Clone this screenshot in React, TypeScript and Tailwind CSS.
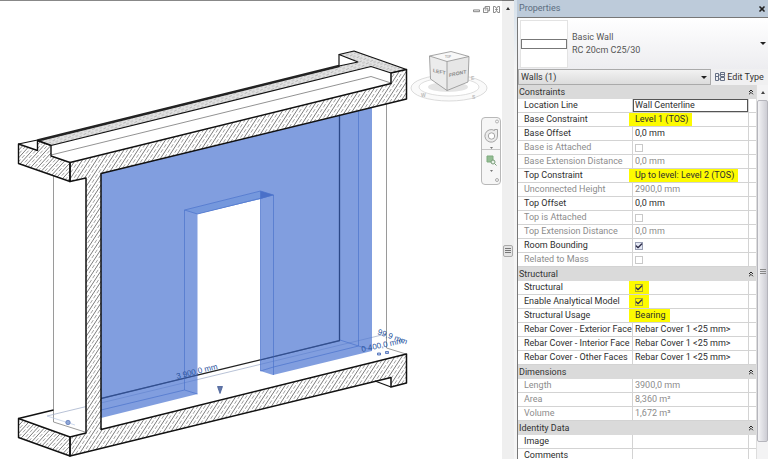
import { Check, ChevronsUp, X } from "lucide-react"

type Row = {
  label: string
  value?: string
  checked?: boolean
  muted?: boolean
  marked?: boolean
  editing?: boolean
}

const groups: { title: string; rows: Row[] }[] = [
  {
    title: "Constraints",
    rows: [
      { label: "Location Line", value: "Wall Centerline", editing: true },
      { label: "Base Constraint", value: "Level 1 (TOS)", marked: true },
      { label: "Base Offset", value: "0,0 mm" },
      { label: "Base is Attached", checked: false, muted: true },
      { label: "Base Extension Distance", value: "0,0 mm", muted: true },
      { label: "Top Constraint", value: "Up to level: Level 2 (TOS)", marked: true },
      { label: "Unconnected Height", value: "2900,0 mm", muted: true },
      { label: "Top Offset", value: "0,0 mm" },
      { label: "Top is Attached", checked: false, muted: true },
      { label: "Top Extension Distance", value: "0,0 mm", muted: true },
      { label: "Room Bounding", checked: true },
      { label: "Related to Mass", checked: false, muted: true },
    ],
  },
  {
    title: "Structural",
    rows: [
      { label: "Structural", checked: true, marked: true },
      { label: "Enable Analytical Model", checked: true, marked: true },
      { label: "Structural Usage", value: "Bearing", marked: true },
      { label: "Rebar Cover - Exterior Face", value: "Rebar Cover 1 <25 mm>" },
      { label: "Rebar Cover - Interior Face", value: "Rebar Cover 1 <25 mm>" },
      { label: "Rebar Cover - Other Faces", value: "Rebar Cover 1 <25 mm>" },
    ],
  },
  {
    title: "Dimensions",
    rows: [
      { label: "Length", value: "3900,0 mm", muted: true },
      { label: "Area", value: "8,360 m²", muted: true },
      { label: "Volume", value: "1,672 m³", muted: true },
    ],
  },
  {
    title: "Identity Data",
    rows: [
      { label: "Image", value: "" },
      { label: "Comments", value: "" },
    ],
  },
]

function Value({ row }: { row: Row }) {
  if (row.editing) {
    return (
      <input
        aria-label={row.label}
        defaultValue={row.value}
        className="block h-[13px] w-full border border-[#555] bg-white pl-px outline-none"
      />
    )
  }

  if (row.checked !== undefined) {
    return (
      <span className={row.marked ? "-ml-1 flex h-full w-5 items-center bg-[#fdfb00] pl-1.5" : "flex h-full items-center pl-0.5"}>
        <span className="relative block size-2">
          <input
            type="checkbox"
            aria-label={row.label}
            defaultChecked={row.checked}
            disabled={row.muted}
            className={`peer block size-2 appearance-none border ${row.muted ? "border-[#c9c9c9]" : row.marked ? "border-[#a5a53c]" : "border-[#9aa0b5] bg-[#e4e8f5]"}`}
          />
          <Check className="pointer-events-none absolute inset-0 hidden size-2 text-[#2c2c48] peer-checked:block" strokeWidth={4} />
        </span>
      </span>
    )
  }

  return (
    <span className={row.marked ? "-ml-1 inline-block h-full bg-[#fdfb00] pr-1 pl-1.5" : "block pl-0.5"}>
      {row.value}
    </span>
  )
}

function PropertyTable() {
  return (
    <table className="w-full table-fixed border-separate border-spacing-0 text-left">
      <colgroup>
        <col className="w-[115px]" />
        <col />
        <col className="w-[7px]" />
      </colgroup>
      {groups.map((group) => (
        <tbody key={group.title}>
          <tr className="h-[14px] bg-[#dadada]">
            <th colSpan={2} className="p-0 pl-px font-normal text-[#333]">{group.title}</th>
            <td className="p-0">
              <ChevronsUp className="-ml-0.5 size-2 text-[#222]" strokeWidth={3} />
            </td>
          </tr>
          {group.rows.map((row) => (
            <tr key={row.label} className={`h-[14px] ${row.muted ? "text-[#8c8c8c]" : "text-[#2e2e2e]"}`}>
              <th className="border-r border-b border-[#d3d3d3] p-0 pl-1.5 font-normal">{row.label}</th>
              <td className="h-[14px] border-r border-b border-[#d3d3d3] p-0">
                <Value row={row} />
              </td>
              <td className="border-b border-[#d3d3d3] p-0" />
            </tr>
          ))}
        </tbody>
      ))}
    </table>
  )
}

function PropertiesPanel() {
  return (
    <aside className="flex w-[251px] shrink-0 flex-col font-[Roboto,sans-serif] text-[9px] leading-[13px] whitespace-nowrap text-[#333]">
      <header className="flex h-[17px] shrink-0 items-center justify-between bg-[#bdcbda] pr-0.5 pl-0.5 text-[#5c6d80]">
        <h2>Properties</h2>
        <button aria-label="Close" className="text-[#222]">
          <X className="size-2" strokeWidth={5} />
        </button>
      </header>

      <div className="flex min-h-0 flex-1 flex-col border-l border-[#777] bg-[#f0f0f1]">
        <button className="flex h-[52px] shrink-0 items-center border-t border-[#777] bg-linear-to-b from-white to-[#ededf0] pr-0.5 pl-0.5 text-left">
          <span className="flex h-12 w-12 items-center border border-[#e3e3e3] bg-white">
            <span className="block h-2.5 w-full border border-[#777]" />
          </span>
          <span className="flex-1 pl-1 text-[#555]">
            <span className="block">Basic Wall</span>
            <span className="block">RC 20cm C25/30</span>
          </span>
          <span className="border-x-[3px] border-t-[3px] border-x-transparent border-t-[#222]" />
        </button>

        <div className="flex h-4 shrink-0 items-stretch">
          <div className="relative flex-1">
            <select
              aria-label="Selected elements"
              className="block h-4 w-full appearance-none border border-[#aaa] bg-linear-to-b from-[#f2f2f2] to-[#dcdcdc] pl-0.5"
            >
              <option>Walls (1)</option>
            </select>
            <span className="pointer-events-none absolute top-[7px] right-1 border-x-[3px] border-t-[3px] border-x-transparent border-t-[#222]" />
          </div>
          <button className="flex w-[57px] items-center justify-center gap-0.5">
            <svg className="size-2.5" viewBox="0 0 10 10" fill="none" stroke="#667085">
              <path d="M.5 1.500h3v7h-3zM.5 4.500h3M5.500 .5h4v4h-4zM5.500 2.500h4M5.500 5.500h4v3h-4zM3.500 3h2M3.500 7h2" />
            </svg>
            Edit Type
          </button>
        </div>

        <div className="flex min-h-0 flex-1">
          <div className="min-w-0 flex-1 overflow-hidden bg-white">
            <PropertyTable />
          </div>
          <div className="flex w-3 shrink-0 flex-col items-center border-l border-[#ddd] bg-[#f3f3f4]">
            <span className="mt-1.5 mb-1.5 border-x-2 border-b-[3px] border-x-transparent border-b-[#444]" />
            <div className="flex h-[342px] w-full flex-col items-center justify-center gap-px rounded-xs border border-[#b5b5bc] bg-linear-to-r from-[#f3f3f5] to-[#cdcdd4]">
              <span className="h-px w-1.5 bg-[#888]" />
              <span className="h-px w-1.5 bg-[#888]" />
              <span className="h-px w-1.5 bg-[#888]" />
            </div>
          </div>
        </div>
      </div>
    </aside>
  )
}

// concrete hatch: solid and dashed diagonals in turn
function Hatch({ clip, from, to, step, run }: { clip: string; from: number; to: number; step: number; run: number }) {
  const count = Math.ceil((to - from) / step)
  return (
    <g clipPath={`url(#${clip})`} strokeWidth=".7">
      {Array.from({ length: count }, (_, i) => (
        <path
          key={i}
          d={`M${from + i * step} 459l${run} -459`}
          stroke={i % 2 ? "#777" : "#444"}
          strokeDasharray={i % 2 ? "4 2" : undefined}
        />
      ))}
    </g>
  )
}

const frontFace =
  "M70 162.500L391 83.500V73L406.500 69.500V99L101 173.500V429.500L406.500 354V383L391 387V377.500L70 456V437L86 433V178L70 181.500Z"
const slabEnd = "M18.500 144L37.500 150.500V140.500L51 145.500V156L70 162.500V181.500L18.500 163.500Z"
const footingEnd = "M18.500 418.500L70 437V456L18.500 437.500Z"

function WallModel() {
  return (
    <svg className="h-[459px] w-[502px] shrink-0" viewBox="0 0 502 459" fill="none" strokeLinejoin="round">
      <defs>
        <clipPath id="front"><path d={frontFace} /></clipPath>
        <clipPath id="ends"><path d={slabEnd + footingEnd} /></clipPath>
        <pattern id="hatchTop" width="5" height="5" patternUnits="userSpaceOnUse" patternTransform="rotate(60)">
          <rect width="5" height="5" fill="#e2e2e2" />
          <path d="M1 0v3M3.500 2v3" stroke="#a8a8a8" strokeWidth=".7" />
        </pattern>
      </defs>

      {/* edges behind the wall */}
      <path d="M53.500 176V422L85 432M386.500 103V348L406 354" stroke="#808080" strokeWidth=".8" />
      <path d="M47 416L386 334" stroke="#9aa8c4" strokeWidth=".7" />
      <path d="M47 416l28 9" stroke="#b9c8e4" strokeWidth=".7" />
      <path d="M101 398.500L340 340.500" stroke="#222" strokeWidth="1.300" />
      <path d="M18.500 418.500L53.500 410" stroke="#111" strokeWidth="1.300" />

      {/* selected wall */}
      <path d="M101 173L372 107V351L273 375L260.500 371V199L197.500 214V394L101 418Z" fill="#5079d2" fillOpacity=".72" />
      <path d="M184.500 210L260.500 191L273.500 195L260.500 199L197.500 214Z" fill="#7598dd" />
      <path d="M260.500 191L273.500 195L260.500 199Z" fill="#4a70c8" />
      <path d="M184.500 210L260.500 191L273.500 195L197.500 214ZM184.500 210V390L197.500 394M273.500 195V375M260.500 191V371M101 410L184.500 390M260.500 371L273.500 367L358.500 346L372 350M358.500 110V346M340 340L358.500 346" stroke="#4a72cb" strokeWidth=".7" />
      <path d="M339.500 115V340.500" stroke="#2b4787" strokeWidth="1.300" />
      <path d="M260.500 360L340 340.500M101 398.500L197.500 375" stroke="#2b4787" strokeWidth=".8" />

      {/* top slab */}
      <path d="M37.500 140.500L339 66L358 62L339 54.500L354 51L406.500 69.500L391 73L371 66.500L51 145.500Z" fill="url(#hatchTop)" stroke="#111" strokeWidth="1.200" />
      <path d="M37.500 140.500L339 66" stroke="#222" strokeWidth="2.400" />
      <path d="M339 54.500V67" stroke="#111" strokeWidth="1.200" />
      <path d="M18.500 144L37.500 140" stroke="#111" strokeWidth="1.200" />
      <path d="M51 155L371 76.500L391 83" stroke="#777" strokeWidth=".8" />

      {/* cut faces of slab, web and foundation */}
      <path d={frontFace} fill="#fff" />
      <Hatch clip="front" from={-260} to={410} step={3.5} run={300} />
      <path d={frontFace} stroke="#111" strokeWidth="1.500" />
      <Hatch clip="ends" from={-460} to={80} step={3.5} run={420} />
      <path d={slabEnd + footingEnd} stroke="#111" strokeWidth="1.400" />
      <path d="M375 381L391 387" stroke="#111" strokeWidth="1.300" />

      {/* temporary dimensions */}
      <g fill="#2d569f" fontFamily="Liberation Sans, sans-serif" fontSize="8">
        <text transform="translate(177 379) rotate(-14)">3 900,0 mm</text>
        <text transform="translate(377 334) rotate(20)">99,9 mm</text>
        <text transform="translate(362 352) rotate(-12)">0 400,0 mm</text>
      </g>
      <path d="M217.500 386.500h5l-2.500 7z" fill="#6478a8" stroke="#35508f" strokeWidth=".7" />
      <circle cx="68" cy="422.500" r="2.200" fill="#8ea6d6" stroke="#5673b5" strokeWidth=".7" />
      <path d="M377.500 353h3v2h-3zM385.500 351.500h3v2h-3z" fill="#b6c6e8" stroke="#4367b5" strokeWidth=".8" />
    </svg>
  )
}

function ViewCube() {
  return (
    <svg className="absolute top-[50px] right-[12px] h-[54px] w-[80px]" viewBox="410 50 80 54" fill="none">
      <ellipse cx="449" cy="88" rx="38" ry="13" fill="#fafafa" stroke="#d2d2d2" strokeWidth=".8" />
      <ellipse cx="449" cy="87" rx="30" ry="9" fill="#fff" stroke="#d6d6d6" strokeWidth=".8" />
      <ellipse cx="448" cy="87" rx="20" ry="5" fill="#e4e4e4" />
      <path d="M429.500 56L451 51.500L469 56.500L447 61.500Z" fill="#f8f8f8" />
      <path d="M429.500 56L447 61.500V90.500L430.500 79Z" fill="#ececec" />
      <path d="M447 61.500L469 56.500L468 82L447 90.500Z" fill="#e6e6e6" />
      <path d="M429.500 56L451 51.500L469 56.500L468 82L447 90.500L430.500 79ZM429.500 56L447 61.500L469 56.500M447 61.500V90.500" stroke="#8f8f8f" strokeWidth=".8" />
      <g fill="#888" fontFamily="Liberation Sans, sans-serif" fontWeight="bold">
        <text fontSize="5" transform="translate(449 77) skewY(-12)">FRONT</text>
        <text fontSize="5" transform="translate(433 72) skewY(12)">LEFT</text>
        <text fontSize="3" x="445" y="57.500" fill="#aaa">TOP</text>
        <text fontSize="5" x="421" y="97" fill="#bbb">W</text>
        <text fontSize="5" x="472" y="99" fill="#bbb">S</text>
        <text fontSize="5" x="471" y="80" fill="#bbb">E</text>
      </g>
    </svg>
  )
}

function NavigationBar() {
  return (
    <div className="absolute top-[117px] right-px flex w-5 flex-col items-center rounded-sm border border-[#b8b8b8] bg-[#f6f6f6]">
      <button aria-label="Steering wheel" className="flex h-8 w-full justify-center border-b border-[#c5c5c5]">
        <svg className="h-8 w-[18px]" viewBox="0 0 18 32" fill="none" stroke="#a5a5a5">
          <circle cx="15" cy="3.500" r="1.500" strokeWidth=".8" />
          <path d="M15.500 11.500V18a6.300 6.300 0 1 1-3-5.500V11.500z" fill="#ececec" />
          <circle cx="9.500" cy="18" r="3.200" fill="#fff" />
          <path d="M8 29h3l-1.500 2z" fill="#777" stroke="none" />
        </svg>
      </button>
      <button aria-label="Zoom" className="flex h-[34px] w-full justify-center">
        <svg className="h-[34px] w-[18px]" viewBox="0 0 18 34" fill="none">
          <path d="M5 6h6v6H5z" fill="#93bd93" stroke="#7fab7f" />
          <circle cx="11" cy="12" r="2" fill="#e8f3e8" stroke="#789b78" />
          <path d="M12.500 13.500l2 2" stroke="#789b78" />
          <path d="M8 20h3l-1.500 2z" fill="#777" />
          <circle cx="15" cy="30" r="1.500" stroke="#999" strokeWidth=".8" />
        </svg>
      </button>
    </div>
  )
}

function WindowButtons() {
  return (
    <div className="absolute top-1 right-0.5 flex h-2.5 items-center gap-[3px] text-[#777]">
      <button aria-label="Minimize">
        <svg className="size-[7px]" viewBox="0 0 8 8" fill="none" stroke="currentColor"><path d="M.5 4.500h7v2h-7z" /></svg>
      </button>
      <button aria-label="Restore">
        <svg className="size-[7px]" viewBox="0 0 8 8" fill="none" stroke="currentColor"><path d="M2.500 2.500v-2h5v5h-2M.5 2.500h5v5h-5zM2 4.500h2" /></svg>
      </button>
      <button aria-label="Close view">
        <svg className="size-[7px]" viewBox="0 0 8 8" fill="none" stroke="currentColor"><path d="M.5 .5h2L4 3l1.500-2.500h2v7h-2L4 5l-1.500 2.500h-2zM2.500 4h3" /></svg>
      </button>
    </div>
  )
}

export default function App() {
  return (
    <div className="flex h-screen overflow-hidden bg-[#f5f5f5]">
      <main className="flex min-w-0 flex-1 border-t border-[#777]">
        <div className="relative -mt-px min-w-0 flex-1 overflow-hidden bg-white">
          <WallModel />
          <WindowButtons />
          <ViewCube />
          <NavigationBar />
          <div className="absolute inset-x-0 top-0 h-px bg-[#888]" />
        </div>
        <div className="flex w-3 shrink-0 flex-col items-center justify-between bg-[#efefef]">
          <span className="mt-1.5 border-x-2 border-b-[3px] border-x-transparent border-b-[#333]" />
          <span className="mt-8 flex h-3 w-2.5 flex-col items-center justify-center gap-px rounded-xs border border-[#aaa] bg-[#e4e4e4]">
            <span className="h-px w-1.5 bg-[#777]" />
            <span className="h-px w-1.5 bg-[#777]" />
            <span className="h-px w-1.5 bg-[#777]" />
          </span>
          <span />
        </div>
      </main>
      <div className="w-[3px] shrink-0 bg-linear-to-b from-[#d5e0ea] to-[#f5f5f5] to-15%" />
      <PropertiesPanel />
    </div>
  )
}
